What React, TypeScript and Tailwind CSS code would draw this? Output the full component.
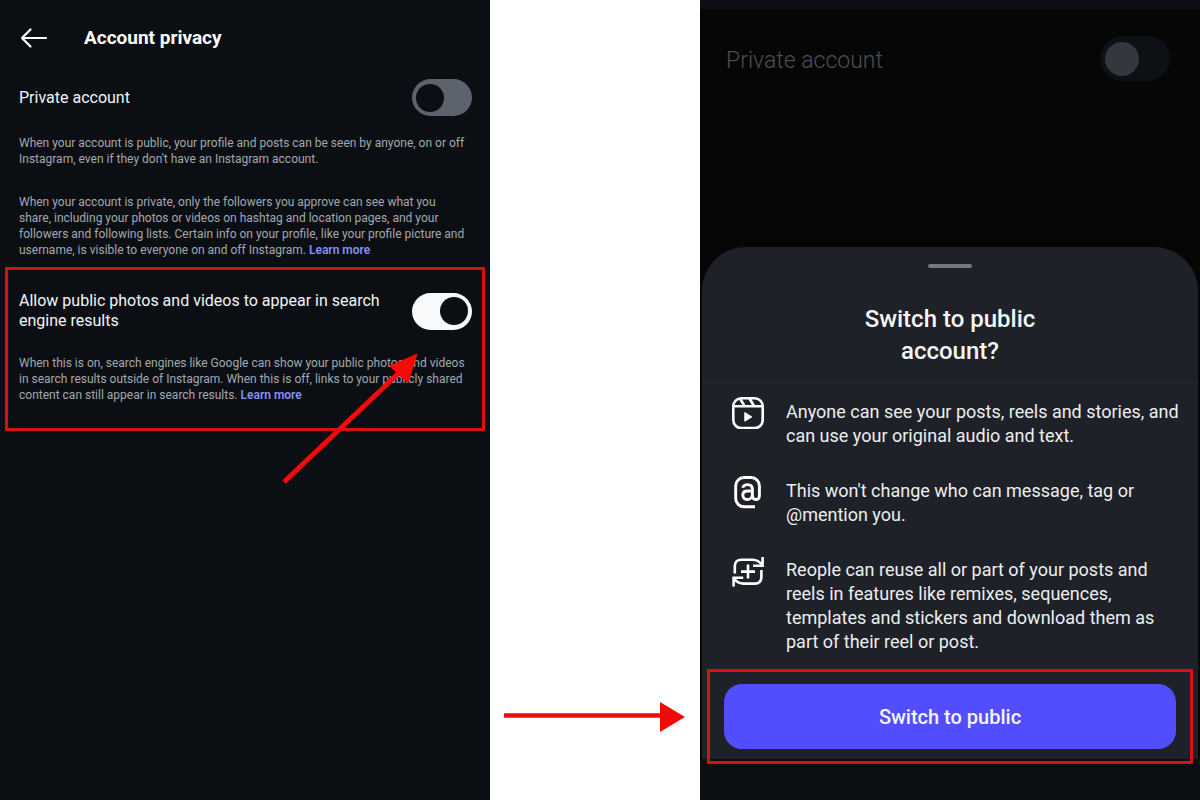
import { useState } from "react";
import type { ReactNode } from "react";

function BackArrow() {
  return (
    <svg width="28" height="22" viewBox="0 0 28 22" fill="none" stroke="currentColor" strokeWidth="2.2" strokeLinecap="round" strokeLinejoin="round">
      <path d="M26 11H2M10.5 2.5L2 11l8.500 8.500" />
    </svg>
  );
}

function ReelsIcon() {
  return (
    <svg width="32" height="32" viewBox="0 0 32 32" fill="none" stroke="currentColor" strokeWidth="2.6" strokeLinejoin="round">
      <rect x="1.3" y="1.3" width="29.4" height="29.8" rx="8" />
      <path d="M1.5 9.3h29M8 1.5l4.500 7.500M17.500 1.500L22 9" />
      <path d="M12.800 15.600v8.600l7-4.300z" fill="currentColor" strokeWidth="1" />
    </svg>
  );
}

function MentionIcon() {
  return (
    <svg width="32" height="33" viewBox="0 0 32 33" fill="none" stroke="currentColor" strokeWidth="2.9" strokeLinejoin="round">
      <path d="M23 30.800H12a8.300 8.300 0 0 1-8.300-8.300V9.800A8.300 8.300 0 0 1 12 1.500h7.200a8.200 8.200 0 0 1 8.200 8.200v9.500c0 2.800-1.500 4.300-3.500 4.300s-3.500-1.500-3.500-4.200V13.500c0-3.200-1.700-4.900-4.900-4.900-2.300 0-4 1-4.900 3.200" />
      <path d="M20.300 15h-4.600c-3.200 0-4.900 1.400-4.900 4 0 2.700 1.800 4.500 4.300 4.500 3.200 0 5.300-2.100 5.300-5.100" />
    </svg>
  );
}

function RemixIcon() {
  return (
    <svg width="32" height="33" viewBox="0 0 32 33" fill="none" stroke="currentColor" strokeWidth="2.6">
      <path d="M2.800 18.500v-7c0-4.600 2.200-6.700 6.700-6.700h11c4.200 0 7 1.500 10 5.500M30.600 2v8.700H21" />
      <path d="M29.400 15v7c0 4.600-2.200 6.600-6.700 6.600h-11c-4.200 0-7-1.500-10-5.400M1.600 31.600v-8.800h9.600" />
      <path d="M16 9.600v14M9 16.600h14" />
    </svg>
  );
}

interface SettingProps {
  id: string;
  label: ReactNode;
  defaultOn?: boolean;
}

function Setting({ id, label, defaultOn = false }: SettingProps) {
  const [on, setOn] = useState(defaultOn);

  return (
    <div className="flex items-center justify-between">
      <label htmlFor={id} className="whitespace-nowrap text-[16px] leading-5 text-[#f2f4f5]">
        {label}
      </label>
      <input
        id={id}
        type="checkbox"
        role="switch"
        checked={on}
        onChange={(e) => setOn(e.target.checked)}
        className="flex h-[37px] w-[60px] shrink-0 appearance-none items-center rounded-full bg-[#5d636c] px-1 before:size-7 before:rounded-full before:bg-[#0b0f14] checked:justify-end checked:bg-[#f8f9fa]"
      />
    </div>
  );
}

function LearnMore() {
  return (
    <a href="#learn-more" className="font-semibold text-[#8790f5]">
      Learn more
    </a>
  );
}

const changes = [
  {
    icon: <ReelsIcon />,
    lines: ["Anyone can see your posts, reels and stories, and", "can use your original audio and text."],
  },
  {
    icon: <MentionIcon />,
    lines: ["This won't change who can message, tag or", "@mention you."],
  },
  {
    icon: <RemixIcon />,
    lines: [
      "Reople can reuse all or part of your posts and",
      "reels in features like remixes, sequences,",
      "templates and stickers and download them as",
      "part of their reel or post.",
    ],
  },
];

function PrivacySettings() {
  return (
    <section className="bg-[#0b0f14] font-['Roboto','Liberation_Sans',sans-serif] text-[12px] leading-4 text-[#a3a8ae]">
      <header className="flex h-[76px] items-center gap-9 px-5 text-white">
        <button aria-label="Back">
          <BackArrow />
        </button>
        <h1 className="text-[19px] font-bold">Account privacy</h1>
      </header>

      <div className="space-y-[27px] pt-[3px] pr-[18px] pl-[19px] whitespace-nowrap">
        <div className="space-y-[19px]">
          <Setting id="private-account" label="Private account" />
          <p>
            When your account is public, your profile and posts can be seen by anyone, on or off
            <br />
            Instagram, even if they don't have an Instagram account.
          </p>
        </div>
        <p>
          When your account is private, only the followers you approve can see what you
          <br />
          share, including your photos or videos on hashtag and location pages, and your
          <br />
          followers and following lists. Certain info on your profile, like your profile picture and
          <br />
          username, is visible to everyone on and off Instagram. <LearnMore />
        </p>
      </div>

      <div className="relative mx-[5px] mt-[9px] border-3 border-[#d8110f] pt-[21px] pr-[10px] pb-[25px] pl-[11px] whitespace-nowrap">
        <Setting
          id="search-engines"
          defaultOn
          label={
            <>
              Allow public photos and videos to appear in search
              <br />
              engine results
            </>
          }
        />
        <p className="mt-6">
          When this is on, search engines like Google can show your public photos and videos
          <br />
          in search results outside of Instagram. When this is off, links to your publicly shared
          <br />
          content can still appear in search results. <LearnMore />
        </p>
        {/* Pointer to the switch */}
        <svg className="pointer-events-none absolute top-[84px] right-16" width="136" height="132" viewBox="0 0 136 132">
          <path d="M2 128L120 16" stroke="#f80808" strokeWidth="5" />
          <path d="M135 0L108 12l18 17z" fill="#f80808" stroke="#f80808" />
        </svg>
      </div>
    </section>
  );
}

function SwitchSheet() {
  return (
    <section className="bg-[#0b0e12] pt-[9px] font-['Roboto','Liberation_Sans',sans-serif]">
      <div className="bg-[#060606] px-[2px]">
        <div className="flex items-start justify-between pt-[27px] pr-7 pb-[166px] pl-6">
          <label htmlFor="private-dimmed" className="pt-[9px] text-[23px] leading-8 font-light text-[#4e4e50]">
            Private account
          </label>
          <input
            id="private-dimmed"
            type="checkbox"
            role="switch"
            disabled
            className="flex h-[45px] w-[70px] appearance-none items-center rounded-full bg-[#0d1014] px-[5px] before:size-[34px] before:rounded-full before:bg-[#34373e]"
          />
        </div>

        <div role="dialog" aria-labelledby="sheet-title" className="flow-root rounded-t-[44px] bg-[#1e2228]">
          <div className="mx-auto mt-[17px] h-1 w-11 rounded-full bg-[#74787f]" />
          <h2 id="sheet-title" className="border-b border-[#24282d] pt-[35px] pb-[14px] text-center text-[24px] leading-8 font-medium text-[#f5f6f7]">
            Switch to public
            <br />
            account?
          </h2>

          <ul className="space-y-7 pt-[15px] pl-[30px] text-[18px] leading-6 text-[#eceeef]">
            {changes.map((change) => (
              <li key={change.lines[0]} className="flex gap-[22px]">
                <span className="shrink-0 text-white">{change.icon}</span>
                <p className="pt-[3px] whitespace-nowrap">
                  {change.lines.map((line) => (
                    <span key={line} className="block">
                      {line}
                    </span>
                  ))}
                </p>
              </li>
            ))}
          </ul>

          <div className="mx-[5px] mt-[15px] -mb-[5px] border-3 border-[#d8110f] px-[14px] py-3">
            <button className="h-[65px] w-full rounded-[18px] bg-[#524dff] text-[20px] font-medium text-[#f5f6ff]">
              Switch to public
            </button>
          </div>
        </div>
      </div>
    </section>
  );
}

export default function App() {
  return (
    <main className="grid min-h-screen grid-cols-[49fr_21fr_50fr] bg-white">
      <PrivacySettings />
      <div className="flex items-end px-[14px] pb-[68px]">
        <svg className="w-full" viewBox="0 0 182 30">
          <path d="M0 13.500h158" stroke="#f00a0a" strokeWidth="4.500" />
          <path d="M156 0v30l25-15z" fill="#f00a0a" />
        </svg>
      </div>
      <SwitchSheet />
    </main>
  );
}
